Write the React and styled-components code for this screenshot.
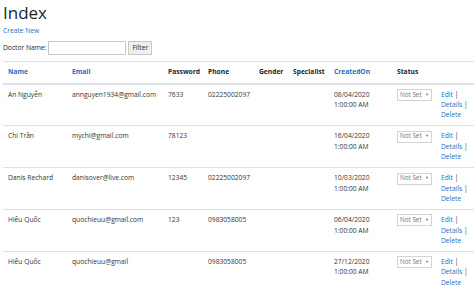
import React from "react";
import styled, { createGlobalStyle } from "styled-components";

const Global = createGlobalStyle`
  html, body {
    margin: 0;
    padding: 0;
    overflow: hidden;
    background: #fff;
  }
  body {
    font-family: "Open Sans", "Noto Sans", sans-serif;
    font-size: 6.7px;
    line-height: 10.3px;
    color: #212529;
  }
`;

const Page = styled.main`
  padding: 0 3px;
`;

const Title = styled.h1`
  margin: 2px 0 3px;
  font-size: 17px;
  line-height: 21px;
  font-weight: 500;
`;

const TextLink = styled.a`
  color: #1b6ec2;
  text-decoration: none;
  cursor: pointer;
`;

const Para = styled.p`
  margin: 0 0 5px;
`;

const FilterForm = styled.form`
  display: flex;
  align-items: center;
  gap: 2px;
  margin-bottom: 6px;
`;

const Input = styled.input`
  width: 78px;
  height: 14px;
  box-sizing: border-box;
  border: 1px solid #c8c8c8;
  font: inherit;
  padding: 0 2px;
`;

const Button = styled.button`
  height: 14px;
  box-sizing: border-box;
  border: 1px solid #c8c8c8;
  background: #efefef;
  font: inherit;
  color: #212529;
  padding: 0 3px;
`;

const Table = styled.table`
  border-collapse: collapse;
  table-layout: fixed;
  width: 471px;
`;

const Th = styled.th`
  box-sizing: border-box;
  text-align: left;
  font-weight: 700;
  padding: 5px;
  border-top: 1px solid #dee2e6;
  border-bottom: 2px solid #dee2e6;
  width: ${(p) => p.$w}px;
  white-space: nowrap;
`;

const Td = styled.td`
  padding: 5px;
  vertical-align: top;
  border-top: 1px solid #dee2e6;
  white-space: nowrap;
  color: #333;
`;

const Select = styled.div`
  display: inline-flex;
  align-items: center;
  justify-content: space-between;
  width: 35px;
  height: 12px;
  box-sizing: border-box;
  border: 1px solid #d4d4d4;
  padding: 0 2px;
  color: #777;
  font-size: 6.3px;
  margin-top: -1px;
`;

const Caret = styled.span`
  font-size: 4px;
`;

const Actions = styled.div`
  display: flex;
  flex-direction: column;
`;

const cols = [
  { label: "Name", w: 64, link: true },
  { label: "Email", w: 96, link: true },
  { label: "Password", w: 40 },
  { label: "Phone", w: 51 },
  { label: "Gender", w: 34 },
  { label: "Specialist", w: 41 },
  { label: "CreatedOn", w: 63, link: true },
  { label: "Status", w: 44 },
  { label: "", w: 38 },
];

const rows = [
  ["An Nguyễn", "annguyen1934@gmail.com", "7633", "02225002097", "08/04/2020"],
  ["Chi Trần", "mychi@gmail.com", "78123", "", "16/04/2020"],
  ["Danis Rechard", "danisover@live.com", "12345", "02225002097", "10/03/2020"],
  ["Hiếu Quốc", "quochieuu@gmail.com", "123", "0983058005", "06/04/2020"],
  ["Hiếu Quốc", "quochieuu@gmail", "", "0983058005", "27/12/2020"],
];

export default function App() {
  return (
    <>
      <Global />
      <Page>
        <Title>Index</Title>
        <Para>
          <TextLink>Create New</TextLink>
        </Para>
        <FilterForm onSubmit={(e) => e.preventDefault()}>
          <span>Doctor Name:</span>
          <Input type="text" />
          <Button type="submit">Filter</Button>
        </FilterForm>
        <Table>
          <thead>
            <tr>
              {cols.map((c, i) => (
                <Th key={i} $w={c.w}>
                  {c.link ? <TextLink>{c.label}</TextLink> : c.label}
                </Th>
              ))}
            </tr>
          </thead>
          <tbody>
            {rows.map((r, i) => (
              <tr key={i}>
                <Td>{r[0]}</Td>
                <Td>{r[1]}</Td>
                <Td>{r[2]}</Td>
                <Td>{r[3]}</Td>
                <Td></Td>
                <Td></Td>
                <Td>
                  {r[4]}
                  <br />
                  1:00:00 AM
                </Td>
                <Td>
                  <Select>
                    Not Set <Caret>▼</Caret>
                  </Select>
                </Td>
                <Td>
                  <Actions>
                    <span>
                      <TextLink>Edit</TextLink> |
                    </span>
                    <span>
                      <TextLink>Details</TextLink> |
                    </span>
                    <span>
                      <TextLink>Delete</TextLink>
                    </span>
                  </Actions>
                </Td>
              </tr>
            ))}
          </tbody>
        </Table>
      </Page>
    </>
  );
}
